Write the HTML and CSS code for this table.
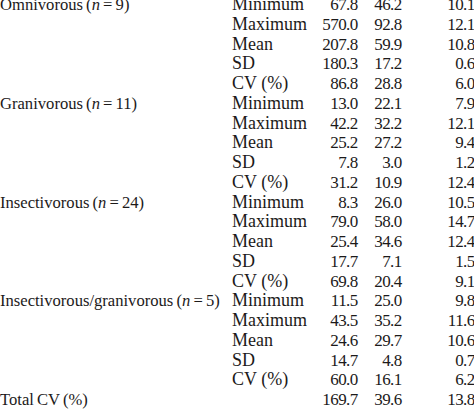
FILE: index.html
```html
<!DOCTYPE html>
<html>
<head>
<meta charset="utf-8">
<link rel="stylesheet" href="styles.css">
</head>
<body>
<div class="table">
  <div class="grp">Omnivorous (<i>n</i> = 9)</div><div class="stat">Minimum</div><div class="num">67.8</div><div class="num">46.2</div><div class="num">10.1</div>
  <div class="grp"></div><div class="stat">Maximum</div><div class="num">570.0</div><div class="num">92.8</div><div class="num">12.1</div>
  <div class="grp"></div><div class="stat">Mean</div><div class="num">207.8</div><div class="num">59.9</div><div class="num">10.8</div>
  <div class="grp"></div><div class="stat">SD</div><div class="num">180.3</div><div class="num">17.2</div><div class="num">0.6</div>
  <div class="grp"></div><div class="stat">CV (%)</div><div class="num">86.8</div><div class="num">28.8</div><div class="num">6.0</div>

  <div class="grp">Granivorous (<i>n</i> = 11)</div><div class="stat">Minimum</div><div class="num">13.0</div><div class="num">22.1</div><div class="num">7.9</div>
  <div class="grp"></div><div class="stat">Maximum</div><div class="num">42.2</div><div class="num">32.2</div><div class="num">12.1</div>
  <div class="grp"></div><div class="stat">Mean</div><div class="num">25.2</div><div class="num">27.2</div><div class="num">9.4</div>
  <div class="grp"></div><div class="stat">SD</div><div class="num">7.8</div><div class="num">3.0</div><div class="num">1.2</div>
  <div class="grp"></div><div class="stat">CV (%)</div><div class="num">31.2</div><div class="num">10.9</div><div class="num">12.4</div>

  <div class="grp">Insectivorous (<i>n</i> = 24)</div><div class="stat">Minimum</div><div class="num">8.3</div><div class="num">26.0</div><div class="num">10.5</div>
  <div class="grp"></div><div class="stat">Maximum</div><div class="num">79.0</div><div class="num">58.0</div><div class="num">14.7</div>
  <div class="grp"></div><div class="stat">Mean</div><div class="num">25.4</div><div class="num">34.6</div><div class="num">12.4</div>
  <div class="grp"></div><div class="stat">SD</div><div class="num">17.7</div><div class="num">7.1</div><div class="num">1.5</div>
  <div class="grp"></div><div class="stat">CV (%)</div><div class="num">69.8</div><div class="num">20.4</div><div class="num">9.1</div>

  <div class="grp">Insectivorous/granivorous (<i>n</i> = 5)</div><div class="stat">Minimum</div><div class="num">11.5</div><div class="num">25.0</div><div class="num">9.8</div>
  <div class="grp"></div><div class="stat">Maximum</div><div class="num">43.5</div><div class="num">35.2</div><div class="num">11.6</div>
  <div class="grp"></div><div class="stat">Mean</div><div class="num">24.6</div><div class="num">29.7</div><div class="num">10.6</div>
  <div class="grp"></div><div class="stat">SD</div><div class="num">14.7</div><div class="num">4.8</div><div class="num">0.7</div>
  <div class="grp"></div><div class="stat">CV (%)</div><div class="num">60.0</div><div class="num">16.1</div><div class="num">6.2</div>

  <div class="grp">Total CV (%)</div><div class="stat"></div><div class="num">169.7</div><div class="num">39.6</div><div class="num">13.8</div>
</div>
</body>
</html>
```

FILE: styles.css
```css
html, body {
  margin: 0;
  padding: 0;
  background: #ffffff;
  overflow: hidden;
}

body {
  width: 474px;
  height: 411px;
  font-family: "Liberation Serif", "Times New Roman", serif;
  color: #1c1a1a;
}

.table {
  display: grid;
  grid-template-columns: 232px 80px 45px 44px 73px;
  grid-auto-rows: 19.75px;
  margin-top: -5px;
  line-height: 19.75px;
  white-space: nowrap;
}

.grp {
  font-size: 16.6px;
  word-spacing: -1px;
}

.stat {
  font-size: 18px;
}

.num {
  font-size: 17px;
  letter-spacing: -0.6px;
  text-align: right;
  margin-right: -0.6px;
}
```
